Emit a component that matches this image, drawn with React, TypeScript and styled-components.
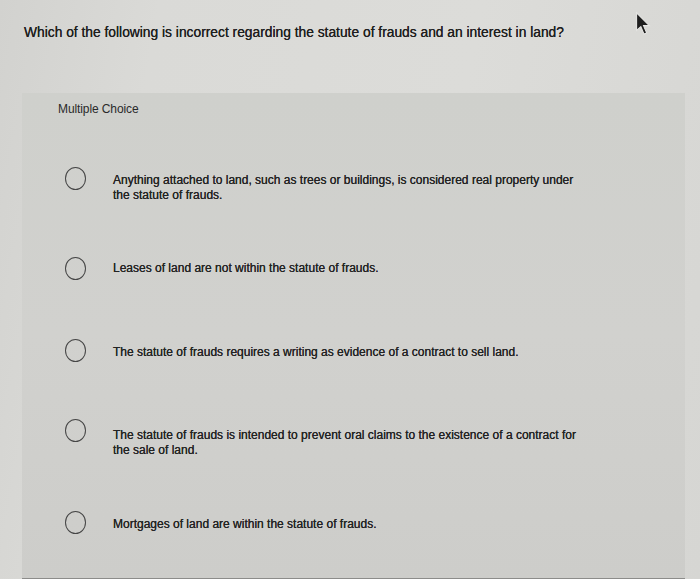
import styled, { createGlobalStyle } from 'styled-components';

const GlobalStyle = createGlobalStyle`
	html, body {
		margin: 0;
		padding: 0;
	}
	body {
		background: #d8d8d5;
		font-family: 'Liberation Sans', Arial, sans-serif;
	}
`;

const Page = styled.div`
	position: relative;
	height: 579px;
	overflow: hidden;
	background: linear-gradient(100deg, #d2d2cf 0%, #dadad7 20%, #dcdcd9 60%, #d6d6d3 100%);
`;

const Question = styled.h1`
	margin: 0;
	padding: 24px 0 0 24px;
	font-size: 13.8px;
	line-height: 18px;
	font-weight: 400;
	color: #1f1f1f;
	text-shadow: 0 0 0.3px #1f1f1f;
`;

const Panel = styled.section`
	margin: 51px 15px 0 22px;
	height: 486px;
	box-sizing: border-box;
	padding: 8px 0 0 36px;
	background: linear-gradient(180deg, #cfd0cc 0%, #d1d1ce 50%, #cdcdca 100%);
	border-bottom: 1px solid #8c8c8a;
`;

const Label = styled.div`
	font-size: 12px;
	line-height: 16px;
	color: #2a2a2a;
	letter-spacing: -0.1px;
`;

const Options = styled.ul`
	list-style: none;
	margin: 50px 0 0;
	padding: 0;
`;

const Option = styled.li<{ $h: number }>`
	display: flex;
	align-items: flex-start;
	height: ${(p) => p.$h}px;
`;

const Radio = styled.span`
	flex: none;
	width: 21px;
	height: 23px;
	margin-left: 7px;
	border: 1.5px solid #464646;
	border-radius: 50%;
	box-sizing: border-box;
`;

const OptionText = styled.p<{ $top: number }>`
	margin: ${(p) => p.$top}px 0 0 27px;
	max-width: 470px;
	font-size: 12px;
	line-height: 15px;
	color: #232323;
	text-shadow: 0 0 0.4px #232323;
`;

const Cursor = styled.svg`
	position: absolute;
	left: 635px;
	top: 11px;
`;

const options = [
	{ text: 'Anything attached to land, such as trees or buildings, is considered real property under the statute of frauds.', h: 90, top: 6 },
	{ text: 'Leases of land are not within the statute of frauds.', h: 82, top: 4 },
	{ text: 'The statute of frauds requires a writing as evidence of a contract to sell land.', h: 80, top: 6 },
	{ text: 'The statute of frauds is intended to prevent oral claims to the existence of a contract for the sale of land.', h: 92, top: 9 },
	{ text: 'Mortgages of land are within the statute of frauds.', h: 40, top: 6 },
];

function App() {
	return (
		<Page>
			<GlobalStyle />
			<Question>Which of the following is incorrect regarding the statute of frauds and an interest in land?</Question>
			<Panel>
				<Label>Multiple Choice</Label>
				<Options>
					{options.map((o) => (
						<Option key={o.text} $h={o.h}>
							<Radio />
							<OptionText $top={o.top}>{o.text}</OptionText>
						</Option>
					))}
				</Options>
			</Panel>
			<Cursor width="17" height="26" viewBox="0 0 16 24">
				<path d="M1.5 1.5 L1.5 18 L5.5 14.5 L8.5 21.5 L11 20.5 L8 13.5 L13.5 13.5 Z" fill="#1e1e1e" stroke="#e8e8e6" strokeWidth="1" />
			</Cursor>
		</Page>
	);
}

export default App;
